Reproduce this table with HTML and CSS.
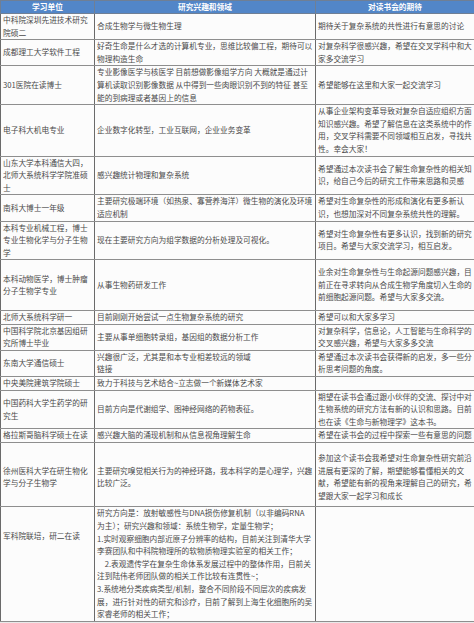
FILE: index.html
```html
<!DOCTYPE html>
<html lang="zh-CN">
<head>
<meta charset="utf-8">
<title>读书会成员</title>
<link rel="stylesheet" href="styles.css">
</head>
<body>
<table class="roster">
  <colgroup>
    <col class="c-unit">
    <col class="c-field">
    <col class="c-hope">
  </colgroup>
  <thead>
    <tr><th>学习单位</th><th>研究兴趣和领域</th><th>对读书会的期待</th></tr>
  </thead>
  <tbody>
    <tr><td>中科院深圳先进技术研究<br>院硕二</td><td>合成生物学与微生物生理</td><td>期待关于复杂系统的共性进行有意思的讨论</td></tr>
    <tr><td>成都理工大学软件工程</td><td>好奇生命是什么才选的计算机专业，思维比较偏工程，期待可以<br>物理构造生命</td><td>对复杂科学很感兴趣，希望在交叉学科中和大<br>家多交流学习</td></tr>
    <tr><td>301医院在读博士</td><td>专业影像医学与核医学 目前想做影像组学方向 大概就是通过计<br>算机读取识别影像数据 从中得到一些肉眼识别不到的特征 甚至<br>能的到病理或者基因上的信息</td><td>希望能够在这里和大家一起交流学习</td></tr>
    <tr><td>电子科大机电专业</td><td>企业数字化转型，工业互联网，企业业务变革</td><td>从事企业架构变革导致对复杂自适应组织方面<br>知识感兴趣。希望了解信息在这类系统中的作<br>用，交叉学科需要不同领域相互启发，寻找共<br>性。幸会大家！</td></tr>
    <tr><td>山东大学本科通信大四，<br>北师大系统科学学院准硕<br>士</td><td>感兴趣统计物理和复杂系统</td><td>希望通过本次读书会了解生命复杂性的相关知<br>识，给自己今后的研究工作带来思路和灵感</td></tr>
    <tr><td>南科大博士一年级</td><td>主要研究极端环境（如热泉、寡营养海洋）微生物的演化及环境<br>适应机制</td><td>希望对生命复杂性的形成和演化有更多新认<br>识，也想加深对不同复杂系统共性的理解。</td></tr>
    <tr><td>本科专业机械工程，博士<br>专业生物化学与分子生物<br>学</td><td>现在主要研究方向为组学数据的分析处理及可视化。</td><td>希望对生命复杂性有更多认识，找到新的研究<br>项目。希望与大家交流学习，相互启发。</td></tr>
    <tr class="roomy"><td>本科动物医学，博士肿瘤<br>分子生物学专业</td><td>从事生物药研发工作</td><td>业余对生命复杂性与生命起源问题感兴趣，目<br>前正在寻求转向从合成生物学角度切入生命的<br>前细胞起源问题。希望与大家多交流。</td></tr>
    <tr><td>北师大系统科学研一</td><td>目前刚刚开始尝试一点生物复杂系统的研究</td><td>希望可以和大家多学习</td></tr>
    <tr><td>中国科学院北京基因组研<br>究所博士毕业</td><td>主要从事单细胞转录组，基因组的数据分析工作</td><td>对复杂科学，信息论，人工智能与生命科学的<br>交叉感兴趣，希望与大家多多交流</td></tr>
    <tr><td>东南大学通信硕士</td><td>兴趣很广泛，尤其是和本专业相差较远的领域<br>链接</td><td>希望通过本次读书会获得新的启发，多一些分<br>析思考问题的角度。</td></tr>
    <tr><td>中央美院建筑学院硕士</td><td>致力于科技与艺术结合~立志做一个新媒体艺术家</td><td></td></tr>
    <tr><td>中国药科大学生药学的研<br>究生</td><td>目前方向是代谢组学、图神经网络的药物表征。</td><td>期望在读书会通过跟小伙伴的交流、探讨中对<br>生物系统的研究方法有新的认识和思路。目前<br>也在读《生命与新物理学》这本书。</td></tr>
    <tr><td>格拉斯哥脑科学硕士在读</td><td>感兴趣大脑的涌现机制和从信息视角理解生命</td><td>希望在读书会的过程中探索一些有意思的问题</td></tr>
    <tr class="lowered"><td>徐州医科大学在研生物化<br>学与分子生物学</td><td>主要研究嗅觉相关行为的神经环路，我本科学的是心理学，兴趣<br>比较广泛。</td><td>参加这个读书会我希望对生命复杂性研究前沿<br>进展有更深的了解，期望能够看懂相关的文<br>献，希望能有新的视角来理解自己的研究，希<br>望跟大家一起学习和成长</td></tr>
    <tr><td class="upper">军科院联培，研二在读</td><td>研究方向是：放射敏感性与DNA损伤修复机制（以非编码RNA<br>为主）；研究兴趣和领域：系统生物学，定量生物学；<br>1.实时观察细胞内部近原子分辨率的结构，目前关注到清华大学<br>李赛团队和中科院物理所的软物质物理实验室的相关工作；<br>　2.表观遗传学在复杂生命体系发展过程中的整体作用，目前关<br>注到陆伟老师团队做的相关工作比较有连贯性~；<br>3.系统地分类疾病类型/机制，整合不同阶段不同层次的疾病发<br>展，进行针对性的研究和诊疗，目前了解到上海生化细胞所的吴<br>家睿老师的相关工作；</td><td></td></tr>
  </tbody>
</table>
</body>
</html>
```

FILE: styles.css
```css
html, body {
  margin: 0;
  padding: 0;
  background: #e9e9e9;
}

body {
  font-family: "Noto Sans CJK SC", "Noto Sans", sans-serif;
}

.roster {
  width: 474px;
  border-collapse: collapse;
  table-layout: fixed;
  font-size: 7.7px;
  line-height: 12.6px;
  color: #4a4a4a;
}

.c-unit { width: 94px; }
.c-field { width: 221px; }
.c-hope { width: 159px; }

.roster th {
  height: 12px;
  padding: 0;
  background: #5286c8;
  color: #ffffff;
  font-weight: bold;
  text-align: center;
  border: 1px solid #6f7f95;
  line-height: 12px;
}

.roster td {
  padding: 0 1px 0 2px;
  background: #fcfcfc;
  border-top: 1px solid #8e8e8e;
  border-bottom: 1px solid #8e8e8e;
  border-left: 1px solid #6a6a6a;
  border-right: 1px solid #6a6a6a;
  vertical-align: middle;
  text-align: left;
  white-space: nowrap;
  overflow: hidden;
}

.roster .roomy td {
  padding-top: 6px;
  padding-bottom: 6px;
}

.roster .lowered td {
  padding-top: 9px;
  padding-bottom: 4px;
}

.roster td.upper {
  vertical-align: top;
  padding-top: 23px;
}
```
